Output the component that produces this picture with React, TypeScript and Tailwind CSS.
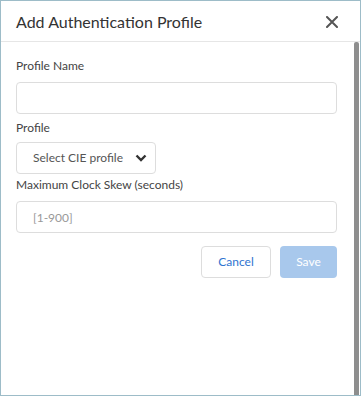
export default function App() {
  return (
    <div className="w-[361px] h-[396px] bg-white border border-[#9dbcc8] flex flex-col font-['Lato','Liberation_Sans',sans-serif] overflow-hidden">
      <div className="h-[41px] shrink-0 flex items-center justify-between pl-[15px] pr-[22px] border-b border-[#e6e6e6]">
        <h1 className="text-[16px] text-[#333] leading-none pt-[1px]">Add Authentication Profile</h1>
        <button className="text-[#555] pt-[1px]" aria-label="Close">
          <svg width="12" height="12" viewBox="0 0 12 12">
            <path d="M1 1 L11 11 M11 1 L1 11" stroke="#555" strokeWidth="2" strokeLinecap="round" />
          </svg>
        </button>
      </div>
      <div className="flex-1 flex min-h-0">
        <div className="flex-1 pl-[15px] pr-[17px] pt-[15px]">
          <label className="block text-[12px] leading-[18px] text-[#444]">Profile Name</label>
          <input className="block mt-[7px] w-full h-[32px] border border-[#ddd] rounded-[4px] px-4 text-[12px] outline-none" />
          <label className="block mt-[5px] text-[12px] leading-[18px] text-[#444]">Profile</label>
          <button className="mt-[5px] w-[140px] h-[32px] border border-[#ddd] rounded-[4px] flex items-center justify-between pl-[16px] pr-[8px] text-[12px] text-[#555]">
            <span>Select CIE profile</span>
            <svg width="12" height="8" viewBox="0 0 12 8">
              <path d="M1.5 1.5 L6 6 L10.5 1.5" stroke="#333" strokeWidth="2.4" fill="none" />
            </svg>
          </button>
          <label className="block mt-[2px] text-[12px] leading-[18px] text-[#444]">Maximum Clock Skew (seconds)</label>
          <input
            placeholder="[1-900]"
            className="block mt-[7px] w-full h-[32px] border border-[#ddd] rounded-[4px] px-4 text-[12px] outline-none placeholder:text-[#999]"
          />
          <div className="flex justify-end gap-[9px] mt-[13px]">
            <button className="w-[70px] h-[32px] border border-[#ddd] rounded-[4px] text-[12px] text-[#2f74d0]">Cancel</button>
            <button className="w-[57px] h-[32px] rounded-[4px] bg-[#a8c8ec] text-[12px] text-white">Save</button>
          </div>
        </div>
        <div className="w-[5px] mr-[1px] bg-[#8e8e8e] rounded-t-[2px]" />
      </div>
    </div>
  );
}
